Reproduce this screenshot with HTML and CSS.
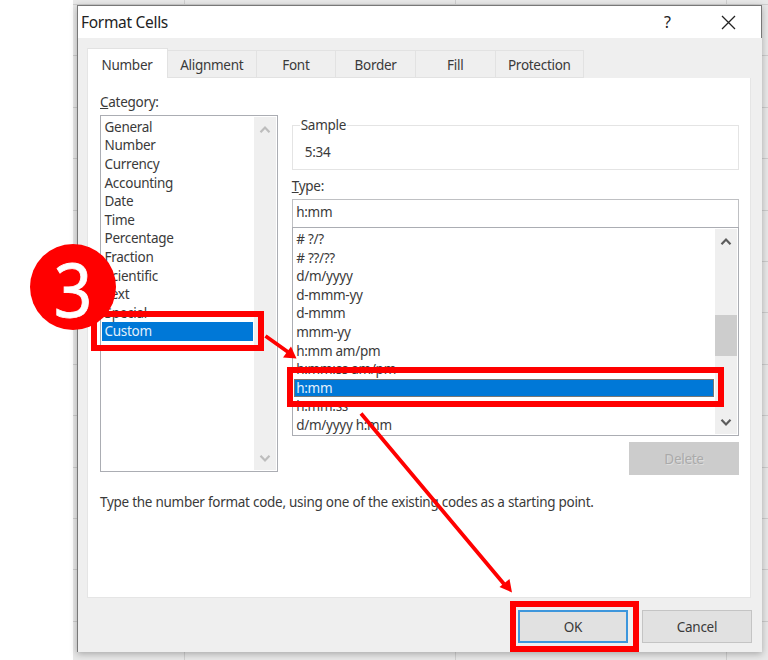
FILE: index.html
```html
<!DOCTYPE html>
<html lang="en">
<head>
<meta charset="utf-8">
<title>Format Cells</title>
<link rel="stylesheet" href="styles.css">
</head>
<body>
<div class="sheet">
  <div class="dialog">
    <header class="titlebar">
      <h1>Format Cells</h1>
      <span class="help">?</span>
      <svg class="close" width="15" height="15" viewBox="0 0 15 15"><path d="M1 1 14 14M14 1 1 14"/></svg>
    </header>
    <nav class="tabs">
      <span class="tab active">Number</span>
      <span class="tab wide">Alignment</span>
      <span class="tab">Font</span>
      <span class="tab">Border</span>
      <span class="tab">Fill</span>
      <span class="tab wide">Protection</span>
    </nav>
    <main class="panel">
      <div class="columns">
        <section class="category">
          <label class="label"><u>C</u>ategory:</label>
          <div class="list category-list">
            <ul>
              <li>General</li><li>Number</li><li>Currency</li><li>Accounting</li><li>Date</li><li>Time</li><li>Percentage</li><li>Fraction</li><li>Scientific</li><li>Text</li><li>Special</li><li class="selected">Custom</li>
            </ul>
            <div class="scrollbar disabled">
              <svg width="12" height="9" viewBox="0 0 12 9"><path d="M1.5 7.2 6 2.5 10.500 7.2"/></svg>
              <svg width="12" height="9" viewBox="0 0 12 9"><path d="M1.500 1.800 6 6.500 10.500 1.800"/></svg>
            </div>
          </div>
        </section>
        <section class="format">
          <fieldset class="sample"><legend>Sample</legend><span>5:34</span></fieldset>
          <label class="label type-label"><u>T</u>ype:</label>
          <div class="input">h:mm</div>
          <div class="list type-list">
            <ul>
              <li># ?/?</li><li># ??/??</li><li>d/m/yyyy</li><li>d-mmm-yy</li><li>d-mmm</li><li>mmm-yy</li><li>h:mm am/pm</li><li>h:mm:ss am/pm</li><li class="selected focus">h:mm</li><li>h:mm:ss</li><li>d/m/yyyy h:mm</li>
            </ul>
            <div class="scrollbar">
              <svg width="12" height="9" viewBox="0 0 12 9"><path d="M1.5 7.2 6 2.5 10.500 7.2"/></svg>
              <div class="thumb"></div>
              <svg width="12" height="9" viewBox="0 0 12 9"><path d="M1.500 1.800 6 6.500 10.500 1.800"/></svg>
            </div>
          </div>
          <div class="button delete">Delete</div>
        </section>
      </div>
      <p class="hint">Type the number format code, using one of the existing codes as a starting point.</p>
    </main>
    <footer class="actions">
      <div class="button ok">OK</div>
      <div class="button">Cancel</div>
    </footer>
  </div>
</div>
<div class="mark mark-category"></div>
<div class="mark mark-type"></div>
<div class="mark mark-ok"></div>
<svg class="arrows" width="768" height="660" viewBox="0 0 768 660">
  <path class="shaft" d="M265.500 336 288 352M361 413.500 504 584"/>
  <path class="head" d="M296.500 358.500 283 357.500 291 346.500ZM512 592.500 499.500 587 509.500 579Z"/>
</svg>
<div class="step"><span>3</span></div>
</body>
</html>
```
FILE: styles.css
```css
* { box-sizing: border-box; }
body {
  margin: 0;
  width: 768px;
  height: 660px;
  overflow: hidden;
  background: #fff;
  color: #3a3a3a;
  font: 13.5px/18.6px "Noto Sans", "Open Sans", sans-serif;
  letter-spacing: -0.28px;
}
.sheet {
  margin-left: 73px;
  height: 660px;
  padding: 5px 6px 8px 4px;
  background:
    linear-gradient(#cfcfcf, #cfcfcf) 111px 0 / 1px 100% no-repeat,
    linear-gradient(#cfcfcf, #cfcfcf) 382px 0 / 1px 100% no-repeat,
    linear-gradient(#cfcfcf, #cfcfcf) 653px 0 / 1px 100% no-repeat,
    linear-gradient(#cfcfcf, #cfcfcf) 0 4px / 100% 1px no-repeat,
    repeating-linear-gradient(transparent 0 50.400px, #cdcdcd 50.400px 51.400px) 0 5px,
    #e8e8e8;
}
.dialog {
  display: flex;
  flex-direction: column;
  width: 685px;
  height: 647px;
  border-left: 1px solid #787878;
  border-top: 1px solid #787878;
  background: #efefef;
  box-shadow: 0 2px 7px rgba(0, 0, 0, .28);
}
.titlebar {
  display: flex;
  align-items: center;
  height: 32px;
  padding-left: 3px;
  background: #fff;
  border-right: 1px solid #787878;
  color: #222;
}
h1 { margin: 0; flex: 1; font-size: 15.5px; font-weight: 400; letter-spacing: -0.3px; }
.help { width: 9px; margin-right: 48px; font-size: 16px; }
.close { margin-right: 25px; fill: none; stroke: #222; stroke-width: 1.3; }
.tabs { display: flex; align-items: flex-end; height: 40px; padding: 10px 0 0 9px; }
.tab {
  width: 79.700px;
  height: 28px;
  border: 1px solid #e2e2e2;
  border-left: 0;
  text-align: center;
  line-height: 28px;
}
.tab.wide { width: 88.500px; }
.tab.active {
  width: 81px;
  height: 30px;
  padding-right: 1px;
  border-left: 1px solid #e5e5e5;
  border-bottom: 0;
  background: #fff;
  line-height: 32px;
}
.panel {
  width: 664px;
  height: 520px;
  margin-left: 9px;
  padding: 14px 11px 0 12px;
  border: 1px solid #e5e5e5;
  border-top: 0;
  background: #fff;
}
.columns { display: flex; gap: 14px; }
.category { width: 178px; }
.label { display: block; height: 22px; line-height: 20px; }
.list { display: flex; border: 1px solid #abadb3; background: #fff; }
ul { flex: 1; margin: 0; padding: 2px 0 0 1px; list-style: none; }
li { height: 18.600px; padding-left: 2.500px; white-space: nowrap; }
li.selected { background: #0078d7; color: #e4f0fb; }
li.focus { border: 1px solid #777; padding-left: 1.500px; line-height: 17px; }
.category-list { height: 357px; margin-top: 1px; }
.category-list ul { padding-top: 1.800px; }
.type-list { height: 209px; }
.scrollbar {
  display: flex;
  flex-direction: column;
  align-items: center;
  justify-content: space-between;
  width: 22px;
  margin: 1px;
  padding: 8px 0 7px;
  background: #efefef;
}
.scrollbar svg { fill: none; stroke: #5c5c5c; stroke-width: 2.2; }
.scrollbar.disabled svg { stroke: #bdbdbd; }
.thumb { width: 100%; height: 41px; margin-top: 6px; background: #cdcdcd; }
.format { width: 448px; }
.sample {
  height: 54px;
  margin: 24px 0 0;
  padding: 8px 12px 0;
  border: 1px solid #e4e4e4;
}
.sample legend { margin-left: -5px; padding: 0 1px; }
.type-label { margin-top: 6px; height: 23px; }
.input { height: 28px; padding-left: 3.500px; border: 1px solid #bfc0c3; border-bottom: 0; line-height: 25px; }
.button {
  width: 110px;
  height: 33px;
  border: 1px solid #c4c4c4;
  background: #e1e1e1;
  text-align: center;
  line-height: 32px;
}
.delete { margin: 6px 0 0 auto; background: #ccc; border-color: #ccc; color: #aaa; text-shadow: 1px 1px #ddd; }
.hint { margin: 18px 0 0; white-space: nowrap; letter-spacing: -0.27px; }
.actions { display: flex; justify-content: flex-end; gap: 14px; padding: 12px 10px 0 0; }
.ok { border: 2px solid #3d96dc; line-height: 30px; }
.mark { position: absolute; border: 6px solid #f00; }
.mark-category { left: 91px; top: 311px; width: 173px; height: 40px; }
.mark-type { left: 287px; top: 367px; width: 437px; height: 40px; }
.mark-ok { left: 510px; top: 601px; width: 129px; height: 51px; }
.arrows { position: absolute; left: 0; top: 0; }
.shaft { fill: none; stroke: #f00; stroke-width: 3.8; }
.head { fill: #f00; }
.step {
  position: absolute;
  left: 30px;
  top: 243.500px;
  width: 86px;
  height: 86px;
  border-radius: 50%;
  background: #f00;
  color: #fff;
  font: 74px/89px "Noto Sans", sans-serif;
  -webkit-text-stroke: 0.8px #fff;
  text-align: center;
}
.step span { display: block; transform: scaleX(.91); }
```
